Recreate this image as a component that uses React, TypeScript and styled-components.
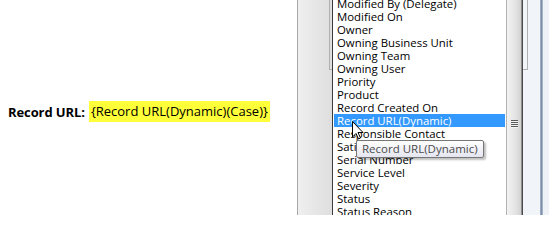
import styled, { createGlobalStyle } from 'styled-components';

const GlobalStyle = createGlobalStyle`
  html, body {
    margin: 0;
    padding: 0;
    background: #ffffff;
    overflow: hidden;
  }
`;

const fields = [
  'Modified By (Delegate)',
  'Modified On',
  'Owner',
  'Owning Business Unit',
  'Owning Team',
  'Owning User',
  'Priority',
  'Product',
  'Record Created On',
  'Record URL(Dynamic)',
  'Responsible Contact',
  'Satisfaction',
  'Serial Number',
  'Service Level',
  'Severity',
  'Status',
  'Status Reason',
];

const SELECTED = 'Record URL(Dynamic)';

export default function App() {
  return (
    <>
      <GlobalStyle />
      <Page>
        <Editor>
          <Field>
            <Label>Record URL:</Label>
            <Token>{'{Record URL(Dynamic)(Case)}'}</Token>
          </Field>
        </Editor>
        <Dialog>
          <Gutter $width={34}>
            <FrameCorner $side='left' />
          </Gutter>
          <Popup>
            <Items>
              <List>
                {fields.map(name => (
                  <Item key={name} $selected={name === SELECTED}>
                    {name}
                  </Item>
                ))}
              </List>
            </Items>
            <ScrollBar>
              <Grip />
            </ScrollBar>
            <Tooltip>Record URL(Dynamic)</Tooltip>
            <Cursor viewBox='0 0 12 19' width='12' height='19'>
              <path
                d='M0.5 0.5 L0.5 16 L4 12.5 L6.5 18 L8.5 17 L6 11.5 L11 11.5 Z'
                fill='#ffffff'
                stroke='#000000'
                strokeWidth='1'
                strokeLinejoin='miter'
              />
            </Cursor>
          </Popup>
          <Gutter $width={17} $tint='#f1f4f8'>
            <FrameCorner $side='right' />
          </Gutter>
          <WindowEdge />
          <Outside />
        </Dialog>
      </Page>
    </>
  );
}

const Page = styled.div`
  display: flex;
  width: 549px;
  height: 215px;
  overflow: hidden;
  background: #ffffff;
`;

const Editor = styled.div`
  width: 298px;
  flex-shrink: 0;
  box-sizing: border-box;
  padding: 101px 0 0 8px;
  border-right: 1px solid #a8a8a8;
`;

const Field = styled.div`
  display: flex;
  align-items: center;
  gap: 4px;
  font-family: 'Open Sans', 'Noto Sans', sans-serif;
  font-size: 13px;
  color: #000000;
`;

const Label = styled.span`
  font-weight: 700;
  letter-spacing: -0.1px;
`;

const Token = styled.span`
  background: #ffff3a;
  padding: 1px 2px 2px 2px;
`;

const Dialog = styled.div`
  flex: 1;
  display: flex;
  height: 215px;
`;

const Gutter = styled.div<{ $width: number; $tint?: string }>`
  width: ${p => p.$width}px;
  flex-shrink: 0;
  background: ${p =>
    p.$tint ? p.$tint : 'linear-gradient(to right, #efefef, #dedede)'};
  display: flex;
  flex-direction: column;
`;

const FrameCorner = styled.div<{ $side: 'left' | 'right' }>`
  height: 69px;
  width: 3px;
  border-bottom: 1px solid #b0b0b0;
  ${p =>
    p.$side === 'left'
      ? 'margin-left: 31px; border-left: 1px solid #b0b0b0;'
      : 'margin-left: 0; width: 4px; border-right: 1px solid #b0b0b0;'}
`;

const Popup = styled.div`
  position: relative;
  display: flex;
  width: 191px;
  flex-shrink: 0;
  box-sizing: border-box;
  border-left: 1px solid #3c3c3c;
  border-right: 1px solid #4a4a4a;
  background: #ffffff;
`;

const Items = styled.div`
  flex: 1;
  overflow: hidden;
  padding: 0 1px;
`;

const List = styled.ul`
  list-style: none;
  margin: -3px 0 0 0;
  padding: 0;
`;

const Item = styled.li<{ $selected: boolean }>`
  height: 13px;
  line-height: 13px;
  padding-left: 3px;
  font-family: 'Open Sans', 'Noto Sans', sans-serif;
  font-size: 11.4px;
  white-space: nowrap;
  color: ${p => (p.$selected ? '#ffffff' : '#000000')};
  background: ${p => (p.$selected ? '#3399ff' : 'transparent')};
`;

const ScrollBar = styled.div`
  width: 16px;
  flex-shrink: 0;
  box-sizing: border-box;
  border-left: 1px solid #b4b4b4;
  border-right: 1px solid #8e8e8e;
  background: linear-gradient(to right, #f2f2f2, #e4e4e4 60%, #d2d2d2);
  display: flex;
  justify-content: center;
  padding-top: 120px;
`;

const Grip = styled.div`
  width: 7px;
  height: 8px;
  background: repeating-linear-gradient(
    to bottom,
    #5a5a5a 0 1px,
    #f4f4f4 1px 2px
  );
`;

const Tooltip = styled.div`
  position: absolute;
  left: 23px;
  top: 140px;
  height: 18px;
  box-sizing: border-box;
  padding: 0 5px;
  border: 1px solid #767676;
  border-radius: 2px;
  background: linear-gradient(to bottom, #ffffff, #e4e5f0);
  box-shadow: 2px 2px 2px rgba(0, 0, 0, 0.25);
  font-family: 'Open Sans', 'Noto Sans', sans-serif;
  font-size: 11.5px;
  line-height: 16px;
  color: #4c4c4c;
  white-space: nowrap;
`;

const Cursor = styled.svg`
  position: absolute;
  left: 19px;
  top: 121px;
`;

const WindowEdge = styled.div`
  width: 3px;
  flex-shrink: 0;
  background: linear-gradient(to right, #a9b8cb, #7d8fa8, #b8c6d8);
`;

const Outside = styled.div`
  flex: 1;
  background: #eef2f7;
`;
